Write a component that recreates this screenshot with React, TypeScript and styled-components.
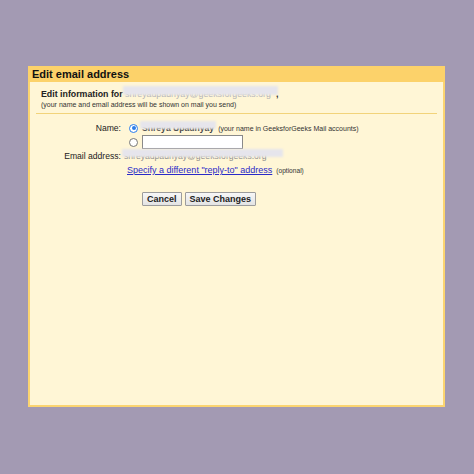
import React from "react";
import styled, { createGlobalStyle } from "styled-components";

const Global = createGlobalStyle`
  html, body { margin: 0; padding: 0; background: #a39ab3; }
  body { font-family: "Liberation Sans", Arial, sans-serif; color: #000; }
`;

const Page = styled.div`
  width: 474px;
  height: 474px;
  padding: 66px 0 0 28px;
  box-sizing: border-box;
  background: #a39ab3;
`;

const Panel = styled.div`
  width: 417px;
  height: 341px;
  box-sizing: border-box;
  background: #fff6d6;
  border: 2px solid #fbd470;
  border-top: 0;
  display: flex;
  flex-direction: column;
`;

const Header = styled.div`
  height: 16px;
  margin: 0 -2px;
  background: #fcd26a;
  font-weight: bold;
  font-size: 11px;
  line-height: 16px;
  padding-left: 4px;
  color: #111;
`;

const Body = styled.div`
  padding: 6px 6px 0 6px;
  display: flex;
  flex-direction: column;
`;

const Info = styled.div`
  padding: 0 0 4px 5px;
  border-bottom: 1.5px solid #f2d37a;
`;

const InfoTitle = styled.div`
  font-weight: bold;
  font-size: 8.8px;
  line-height: 12px;
  color: #222;
  display: flex;
  align-items: center;
`;

const Note = styled.span<{ $size?: number }>`
  font-size: ${(p) => p.$size ?? 7}px;
  color: #333;
`;

const SubNote = styled.div`
  font-size: 7px;
  line-height: 9px;
  color: #333;
`;

const Blurred = styled.span<{ $bold?: boolean; $pad?: number; $tone?: string }>`
  position: relative;
  display: inline-block;
  white-space: nowrap;
  padding-right: ${(p) => p.$pad ?? 0}px;
  font-weight: ${(p) => (p.$bold ? "bold" : "normal")};
  color: ${(p) => p.$tone ?? "#8a8a8a"};
  &::after {
    content: "";
    position: absolute;
    left: -2px;
    right: -2px;
    top: -2px;
    height: 78%;
    background: #e6e5ec;
    filter: blur(1.2px);
  }
`;

const Form = styled.div`
  display: grid;
  grid-template-columns: 85px auto;
  column-gap: 3px;
  margin-top: 7px;
  font-size: 8.6px;
  color: #222;
`;

const Label = styled.div`
  text-align: right;
  line-height: 14px;
`;

const Cell = styled.div`
  display: flex;
  align-items: center;
  min-height: 14px;
  gap: 4px;
`;

const Radio = styled.span<{ $on?: boolean }>`
  width: 7px;
  height: 7px;
  border-radius: 50%;
  border: 1px solid ${(p) => (p.$on ? "#2b7de9" : "#777")};
  background: #fff;
  margin-left: 5px;
  display: inline-flex;
  align-items: center;
  justify-content: center;
  flex: none;
  &::after {
    content: "";
    display: ${(p) => (p.$on ? "block" : "none")};
    width: 4px;
    height: 4px;
    border-radius: 50%;
    background: #2b7de9;
  }
`;

const TextInput = styled.div`
  width: 99px;
  height: 12px;
  border: 1px solid #8a8a8a;
  background: #fff;
  box-sizing: content-box;
`;

const Link = styled.a`
  color: #2a2ac8;
  text-decoration: underline;
  font-size: 9px;
  margin-left: 3px;
`;

const Buttons = styled.div`
  display: flex;
  gap: 3px;
  margin: 15px 0 0 106px;
`;

const Button = styled.button`
  font-family: "Liberation Sans", Arial, sans-serif;
  font-weight: bold;
  font-size: 9px;
  height: 14px;
  padding: 0 4px;
  color: #222;
  background: linear-gradient(#f7f7f7, #e3e3e3);
  border: 1px solid #9c9c9c;
  border-radius: 1px;
  line-height: 12px;
`;

export default function App() {
  return (
    <>
      <Global />
      <Page>
        <Panel>
          <Header>Edit email address</Header>
          <Body>
            <Info>
              <InfoTitle>
                Edit information for&nbsp;
                <Blurred $pad={5} $tone="#b0b0b4">shreyaupadhyay@geeksforgeeks.org</Blurred>,
              </InfoTitle>
              <SubNote>(your name and email address will be shown on mail you send)</SubNote>
            </Info>
            <Form>
              <Label>Name:</Label>
              <Cell>
                <Radio $on />
                <Blurred $bold $tone="#444">Shreya Upadhyay</Blurred>
                <Note $size={7}>(your name in GeeksforGeeks Mail accounts)</Note>
              </Cell>
              <div />
              <Cell>
                <Radio />
                <TextInput />
              </Cell>
              <Label>Email address:</Label>
              <Cell>
                <Blurred $pad={14}>shreyaupadhyay@geeksforgeeks.org</Blurred>
              </Cell>
              <div />
              <Cell>
                <Link href="#">Specify a different "reply-to" address</Link>
                <Note $size={6.6}>(optional)</Note>
              </Cell>
            </Form>
            <Buttons>
              <Button>Cancel</Button>
              <Button>Save Changes</Button>
            </Buttons>
          </Body>
        </Panel>
      </Page>
    </>
  );
}
